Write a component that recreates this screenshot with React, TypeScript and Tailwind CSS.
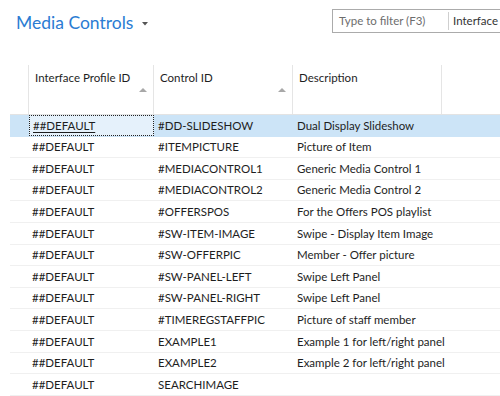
import React from "react";

const rows: [string, string][] = [
  ["#DD-SLIDESHOW", "Dual Display Slideshow"],
  ["#ITEMPICTURE", "Picture of Item"],
  ["#MEDIACONTROL1", "Generic Media Control 1"],
  ["#MEDIACONTROL2", "Generic Media Control 2"],
  ["#OFFERSPOS", "For the Offers POS playlist"],
  ["#SW-ITEM-IMAGE", "Swipe - Display Item Image"],
  ["#SW-OFFERPIC", "Member - Offer picture"],
  ["#SW-PANEL-LEFT", "Swipe Left Panel"],
  ["#SW-PANEL-RIGHT", "Swipe Left Panel"],
  ["#TIMEREGSTAFFPIC", "Picture of staff member"],
  ["EXAMPLE1", "Example 1 for left/right panel"],
  ["EXAMPLE2", "Example 2 for left/right panel"],
  ["SEARCHIMAGE", ""],
];

function SortArrow() {
  return (
    <svg width="8" height="5" viewBox="0 0 8 5" className="absolute right-[6px] top-[22px]">
      <path d="M0 5 L4 1 L8 5 Z" fill="#a8a8a8" />
    </svg>
  );
}

export default function App() {
  return (
    <div
      className="w-[500px] h-[396px] bg-white overflow-hidden text-[#1e1e1e]"
      style={{ fontFamily: 'Lato, "Open Sans", sans-serif' }}
    >
      <div className="flex items-start h-[65px]">
        <div className="w-[332px] shrink-0 pl-[16px] pt-[10px] flex items-center">
          <span className="text-[17.5px] text-[#2b7cd3] leading-[26px]">Media Controls</span>
          <svg width="6" height="4" viewBox="0 0 6 4" className="ml-[9px] mt-[1px]">
            <path d="M0 0 L6 0 L3 3.5 Z" fill="#555" />
          </svg>
        </div>
        <div className="mt-[9px] w-[200px] shrink-0 h-[24px] border border-[#ababab] flex items-center text-[11.5px] whitespace-nowrap overflow-hidden">
          <span className="w-[115px] pl-[6px] text-[#6d6d6d] shrink-0">Type to filter (F3)</span>
          <div className="w-px h-[18px] bg-[#cfcfcf] shrink-0" />
          <span className="pl-[4px] text-[#333]">Interface Profile ID</span>
        </div>
      </div>

      <div className="ml-[10px]">
        <div className="flex h-[50px] border-b border-[#e3e3e3] text-[11.5px]">
          <div className="w-[18px] shrink-0" />
          <div className="relative w-[125px] shrink-0 border-l border-[#e5e5e5] pl-[6px] pt-[4px]">
            Interface Profile ID
            <SortArrow />
          </div>
          <div className="relative w-[139px] shrink-0 border-l border-[#e5e5e5] pl-[6px] pt-[4px]">
            Control ID
            <SortArrow />
          </div>
          <div className="w-[150px] shrink-0 border-l border-[#e5e5e5] border-r pl-[6px] pt-[4px]">
            Description
          </div>
        </div>
        {rows.map(([id, desc], i) => {
          const sel = i === 0;
          return (
            <div
              key={i}
              className={
                "flex h-[21.6px] items-center text-[11.5px] border-b " +
                (sel ? "bg-[#cce4f7] border-[#cce4f7]" : "border-[#f0f0f0]")
              }
            >
              <div className="w-[19px] shrink-0" />
              <div
                className={
                  "w-[125px] shrink-0 h-full flex items-center pl-[3px] " +
                  (sel ? "bg-[#e5f1fb] border border-dotted border-[#222] pl-[2px]" : "")
                }
              >
                <span className={sel ? "underline underline-offset-2" : ""}>##DEFAULT</span>
              </div>
              <div className="w-[139px] shrink-0 pl-[4px]">{id}</div>
              <div className="w-[150px] shrink-0 pl-[4px] whitespace-nowrap">{desc}</div>
            </div>
          );
        })}
      </div>
    </div>
  );
}
